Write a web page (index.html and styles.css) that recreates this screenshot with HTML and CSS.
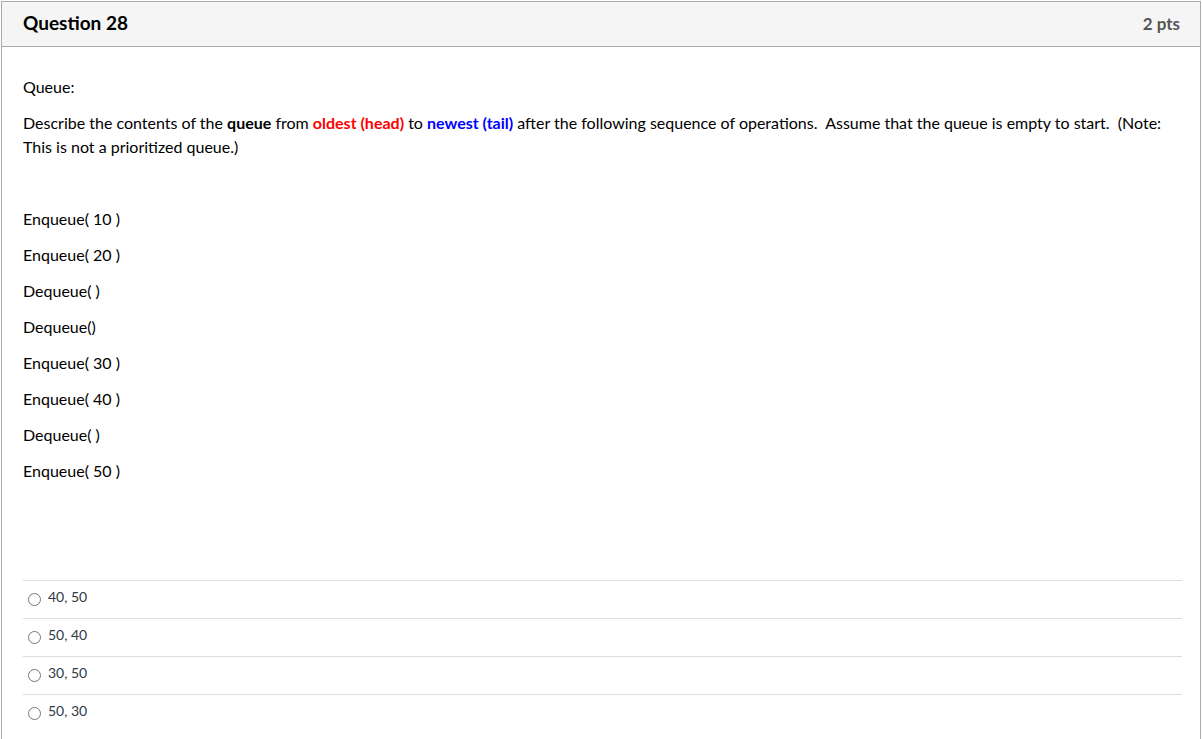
FILE: index.html
```html
<!DOCTYPE html>
<html>
<head>
<meta charset="utf-8">
<link rel="stylesheet" href="styles.css">
</head>
<body>
<div class="question">
  <div class="q-header">
    <span class="q-title">Question 28</span>
    <span class="q-pts">2 pts</span>
  </div>
  <div class="q-body">
    <div class="q-text">
      <p>Queue:</p>
      <p>Describe the contents of the <strong>queue</strong> from <strong class="red">oldest (head)</strong> to <strong class="blue">newest (tail)</strong> after the following sequence of operations.&nbsp; Assume that the queue is empty to start.&nbsp; (Note: This is not a prioritized queue.)</p>
      <p>&nbsp;</p>
      <p>Enqueue( 10 )</p>
      <p>Enqueue( 20 )</p>
      <p>Dequeue( )</p>
      <p>Dequeue()</p>
      <p>Enqueue( 30 )</p>
      <p>Enqueue( 40 )</p>
      <p>Dequeue( )</p>
      <p>Enqueue( 50 )</p>
      <p>&nbsp;</p>
      <p>&nbsp;</p>
    </div>
    <div class="answers">
      <label class="answer"><span class="radio"></span><span class="a-text">40, 50</span></label>
      <label class="answer"><span class="radio"></span><span class="a-text">50, 40</span></label>
      <label class="answer"><span class="radio"></span><span class="a-text">30, 50</span></label>
      <label class="answer"><span class="radio"></span><span class="a-text">50, 30</span></label>
    </div>
  </div>
</div>
</body>
</html>
```

FILE: styles.css
```css
html, body {
  margin: 0;
  padding: 0;
  background: #fff;
}
body {
  padding: 1px 0 0 1px;
  font-family: Lato, "Open Sans", sans-serif;
  color: #2d3b45;
}
.question {
  width: 1198px;
  border: 1px solid #aaaaaa;
  border-bottom: none;
  min-height: 760px;
}
.q-header {
  display: flex;
  justify-content: space-between;
  align-items: center;
  height: 45px;
  padding: 0 20px 2px 21px;
  box-sizing: border-box;
  background: #f5f5f5;
  border-bottom: 1px solid #aaaaaa;
}
.q-title {
  font-size: 19px;
  font-weight: 700;
  color: #000;
  margin-bottom: 1px;
}
.q-pts {
  font-size: 17px;
  font-weight: 700;
  color: #555;
}
.q-body {
  padding: 28px 18px 0 21px;
}
.q-text p {
  margin: 0 0 12px;
  font-size: 16px;
  line-height: 24px;
  color: #000;
}
.q-text strong {
  font-weight: 700;
}
.red { color: #ff0000; }
.blue { color: #0000ff; }
.answers {
  margin-top: 25px;
}
.answer {
  display: flex;
  align-items: center;
  height: 38px;
  padding-bottom: 4px;
  box-sizing: border-box;
  border-top: 1px solid #dddddd;
  padding-left: 5px;
}
.radio {
  width: 11px;
  height: 11px;
  border: 1px solid #777;
  border-radius: 50%;
  margin-right: 7px;
  margin-top: 3px;
}
.a-text {
  font-size: 14px;
  color: #2d3b45;
  margin-bottom: 2px;
}
```
